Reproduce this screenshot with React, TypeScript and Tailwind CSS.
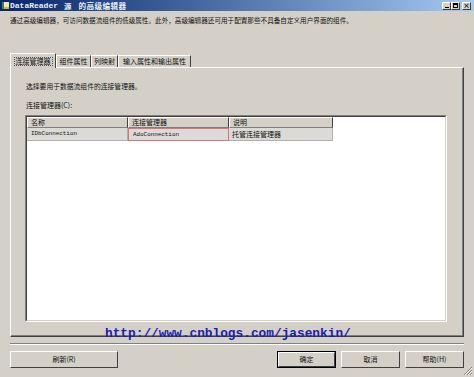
const cjk = "font-['SimSun','Noto_Sans_CJK_SC',sans-serif]";
const mono = "font-['Liberation_Mono',monospace]";

function TitleBar() {
  return (
    <div className="flex h-[11px] items-center bg-gradient-to-r from-[#0a246a] to-[#a6caf0] pl-[2px] pr-[3px]">
      <svg width="7" height="7" viewBox="0 0 7 7" className="mr-[1px]">
        <rect x="0" y="0" width="7" height="7" fill="#f4e9a6" />
        <rect x="0" y="0" width="2" height="7" fill="#3a8a3a" />
        <rect x="2" y="5" width="5" height="2" fill="#d8b040" />
      </svg>
      <span className={`${mono} text-[8px] font-bold leading-none text-[#e8eefa]`}>DataReader</span>
      <span className={`${cjk} ml-[6px] text-[7.4px] font-bold leading-none text-[#e8eefa]`}>源</span>
      <span className={`${cjk} ml-[7px] text-[7.6px] font-bold leading-none tracking-[0.4px] text-[#e8eefa]`}>的高级编辑器</span>
      <div className="ml-auto flex gap-[0px]">
        <WinBtn>
          <div className="mt-[4px] h-[1px] w-[4px] bg-black" />
        </WinBtn>
        <WinBtn>
          <div className="h-[5px] w-[5px] border border-t-2 border-black" />
        </WinBtn>
        <div className="w-[2px]" />
        <WinBtn>
          <span className="text-[7px] font-bold leading-none">×</span>
        </WinBtn>
      </div>
    </div>
  );
}

function WinBtn({ children }: { children: React.ReactNode }) {
  return (
    <div className="flex h-[8px] w-[9px] items-center justify-center border border-t-white border-l-white border-r-[#404040] border-b-[#404040] bg-[#d4d0c8]">
      {children}
    </div>
  );
}

function Tab({ label, width, active }: { label: string; width: number; active?: boolean }) {
  return (
    <div
      style={{ width }}
      className={
        active
          ? "relative z-10 -mb-[1px] flex h-[15px] items-center justify-center border-l border-t border-r border-l-white border-t-white border-r-[#404040] bg-[#d4d0c8]"
          : "flex h-[12px] items-center justify-center border-l border-t border-r border-l-white border-t-white border-r-[#404040] bg-[#d4d0c8]"
      }
    >
      <span className={active ? "border border-dotted border-[#505050] px-[1px]" : ""}>{label}</span>
    </div>
  );
}

function Btn({ label, width, primary }: { label: string; width: number; primary?: boolean }) {
  return (
    <div style={{ width }} className={primary ? "h-[17px] border border-black" : "h-[17px]"}>
      <div className="flex h-full items-center justify-center border border-t-white border-l-white border-r-[#404040] border-b-[#404040] bg-[#d4d0c8]">
        <span className="-mt-[1px]">{label}</span>
      </div>
    </div>
  );
}

export default function App() {
  return (
    <div className={`${cjk} relative h-[377px] w-[474px] overflow-hidden bg-[#d4d0c8] text-[7px] leading-none text-[#111]`}>
      <TitleBar />

      <p className="mt-[5px] pl-[10px] text-[6.6px] leading-[8px]">
        通过高级编辑器，可访问数据流组件的低级属性。此外，高级编辑器还可用于配置那些不具备自定义用户界面的组件。
      </p>

      <div className="mt-[29px] flex items-end pl-[10px]">
        <Tab label="连接管理器" width={46} active />
        <Tab label="组件属性" width={35} />
        <Tab label="列映射" width={27} />
        <Tab label="输入属性和输出属性" width={73} />
      </div>

      <div className="ml-[10px] h-[270px] w-[454px] border border-t-white border-l-white border-r-[#404040] border-b-[#404040] bg-[#d4d0c8]">
        <div className="h-full border-r border-b border-r-[#808080] border-b-[#808080] pl-[15px] pt-[14px]">
          <p className="leading-[8px] text-[6.8px]">选择要用于数据流组件的连接管理器。</p>
          <p className="mt-[11px] leading-[8px]">连接管理器(C):</p>

          <div className="ml-[-1px] mt-[6px] h-[207px] w-[422px] border border-t-[#808080] border-l-[#808080] border-r-white border-b-white">
            <div className="h-full border border-t-[#404040] border-l-[#404040] border-r-[#d4d0c8] border-b-[#d4d0c8] bg-white">
              <div className="flex h-[11px] w-[306px]">
                {["名称", "连接管理器", "说明"].map((h, i) => (
                  <div
                    key={h}
                    className={`flex h-full items-center border border-t-white border-l-white border-r-[#404040] border-b-[#808080] bg-[#d4d0c8] pl-[3px] ${i === 2 ? "w-[104px]" : "w-[101px]"}`}
                  >
                    {h}
                  </div>
                ))}
              </div>
              <div className="flex h-[13px] w-[306px] bg-[#dcdad6]">
                <div className={`${mono} flex w-[101px] items-center border-r border-b border-[#b0b0b0] pl-[4px] text-[5.9px]`}>
                  IDbConnection
                </div>
                <div className={`${mono} flex w-[101px] items-center border border-[#e0707c] bg-[#dcdad6] pl-[4px] text-[5.9px]`}>
                  AdoConnection
                </div>
                <div className="flex w-[104px] items-center border-r border-b border-[#b0b0b0] pl-[3px]">托管连接管理器</div>
              </div>
            </div>
          </div>
        </div>
      </div>

      <div className="ml-[10px] mt-[6px] w-[454px] border-t border-b border-t-[#808080] border-b-white" />

      <div className="mt-[6px] flex px-[10px]">
        <Btn label="刷新(R)" width={108} />
        <div className="ml-auto flex gap-[5px]">
          <Btn label="确定" width={59} primary />
          <Btn label="取消" width={59} />
          <Btn label="帮助(H)" width={59} />
        </div>
      </div>

      <span
        className={`${mono} absolute left-[105px] top-[328px] text-[12.8px] font-bold leading-none text-[#1c1cb4]`}
      >
        http://www.cnblogs.com/jasenkin/
      </span>

      <svg width="10" height="10" viewBox="0 0 10 10" className="absolute bottom-[1px] right-[1px]">
        <path d="M9 1 L1 9 M9 4 L4 9 M9 7 L7 9" stroke="#808080" strokeWidth="1" />
        <path d="M9 2 L2 9 M9 5 L5 9 M9 8 L8 9" stroke="#ffffff" strokeWidth="1" />
      </svg>
    </div>
  );
}
